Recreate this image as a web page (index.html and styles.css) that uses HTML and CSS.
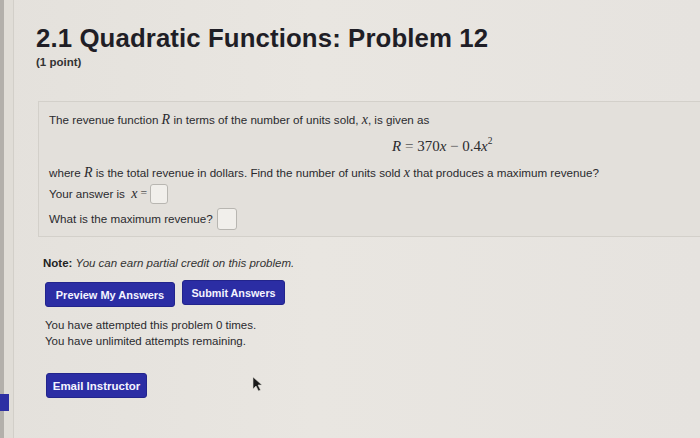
FILE: index.html
```html
<!DOCTYPE html>
<html>
<head>
<meta charset="utf-8">
<link rel="stylesheet" href="styles.css">
</head>
<body>
<div class="page">
  <div class="rail">
    <div class="rail-edge"></div>
    <div class="rail-panel"><div class="rail-tab"></div></div>
  </div>
  <main class="main">
    <h1 class="title">2.1 Quadratic Functions: Problem 12</h1>
    <div class="points">(1 point)</div>
    <section class="problem">
      <p class="line first">The revenue function <i class="m">R</i> in terms of the number of units sold, <i class="m">x</i>, is given as</p>
      <p class="eq"><i class="m">R</i> <span class="op">=</span> 370<i class="m">x</i> <span class="op">−</span> 0.4<i class="m">x</i><sup>2</sup></p>
      <p class="line">where <i class="m">R</i> is the total revenue in dollars. Find the number of units sold <i class="m">x</i> that produces a maximum revenue?</p>
      <p class="line ans">Your answer is <i class="m">x</i> <span class="op">=</span><span class="box b1"></span></p>
      <p class="line ans">What is the maximum revenue?<span class="box b2"></span></p>
    </section>
    <p class="note"><b>Note:</b> <i>You can earn partial credit on this problem.</i></p>
    <div class="buttons">
      <button class="btn preview">Preview My Answers</button>
      <button class="btn submit">Submit Answers</button>
    </div>
    <p class="attempts">You have attempted this problem 0 times.<br>You have unlimited attempts remaining.</p>
    <div class="email-row">
      <button class="btn email">Email Instructor</button>
      <svg class="cursor" width="12" height="16" viewBox="0 0 12 16"><path d="M1 1 L1 13 L4 10 L6.5 15 L8.5 14 L6 9 L10 9 Z" fill="#1a1a1a" stroke="#d8d6d0" stroke-width="0.6"/></svg>
    </div>
  </main>
</div>
</body>
</html>
```
FILE: styles.css
```css
html, body {
  margin: 0;
  padding: 0;
  width: 700px;
  height: 438px;
  overflow: hidden;
}
body {
  background: linear-gradient(90deg, #e4e1dc 0%, #e9e6e1 45%, #e6e3df 100%);
  font-family: "Liberation Sans", Arial, sans-serif;
  color: #2a2a2e;
}
.page {
  display: flex;
  height: 438px;
  overflow: hidden;
}
.rail {
  display: flex;
  width: 14px;
  flex: none;
}
.rail-edge {
  width: 4px;
  background: #b3b0ab;
}
.rail-panel {
  width: 9px;
  background: #e0ddd7;
  border-right: 1px solid #d2cfc9;
  position: relative;
}
.rail-tab {
  position: absolute;
  left: -4px;
  top: 394px;
  width: 9px;
  height: 17px;
  background: #2d2fa3;
}
.main {
  flex: 1;
  padding-left: 22px;
  min-width: 0;
  overflow: hidden;
}
.title {
  margin: 24px 0 0 0;
  font-size: 25.8px;
  line-height: 28px;
  font-weight: bold;
  color: #1f1e26;
  letter-spacing: 0.1px;
  white-space: nowrap;
}
.points {
  margin-top: 4px;
  font-size: 11.5px;
  font-weight: bold;
  color: #333;
}
.problem {
  margin: 33px 0 0 2px;
  width: 800px;
  padding: 10px 0 6px 10px;
  background: #e3e0db;
  border: 1px solid #d3d0ca;
  box-sizing: border-box;
  height: 136px;
}
.line {
  margin: 0;
  font-size: 11.65px;
  line-height: 16px;
  white-space: nowrap;
}
.m {
  font-family: "Liberation Serif", "Times New Roman", serif;
  font-style: italic;
  font-size: 14px;
}
.eq {
  margin: 10px 0 11px 343px;
  font-family: "Liberation Serif", "Times New Roman", serif;
  font-size: 15px;
  line-height: 16px;
}
.eq .m { font-size: 15px; }
.eq sup {
  font-size: 9.5px;
  vertical-align: 7px;
  line-height: 0;
}
.op {
  font-family: "Liberation Serif", serif;
  color: #555;
}
.ans {
  margin-top: 3px;
  display: flex;
  align-items: center;
  white-space: pre;
}
.ans + .ans { margin-top: 4px; }
.ans .m { margin: 0 3px; }
.box {
  display: inline-block;
  width: 16px;
  height: 18px;
  border: 1px solid #b8b6b1;
  border-radius: 3px;
  background: #f1efeb;
  margin-left: 3px;
}
.b2 { width: 18px; height: 20px; margin-left: 4px; }
.note {
  margin: 20px 0 0 7px;
  font-size: 11.5px;
  color: #222;
}
.note i { color: #333; }
.buttons {
  display: flex;
  gap: 7px;
  margin: 11px 0 0 9px;
  align-items: flex-start;
}
.btn {
  font-family: "Liberation Sans", Arial, sans-serif;
  font-weight: bold;
  font-size: 11px;
  color: #f4f4ff;
  background: #2b2da4;
  border: 1px solid #22248c;
  border-radius: 3px;
  padding: 0;
  height: 25px;
  cursor: default;
}
.preview { margin-top: 2px; width: 130px; }
.submit { width: 103px; font-size: 10.8px; }
.attempts {
  margin: 10px 0 0 9px;
  font-size: 11.5px;
  line-height: 16px;
  color: #2a2a2e;
}
.email-row {
  display: flex;
  align-items: flex-start;
  margin: 24px 0 0 10px;
}
.email { width: 101px; font-size: 11.5px; }
.cursor { margin: 3px 0 0 105px; }
```
